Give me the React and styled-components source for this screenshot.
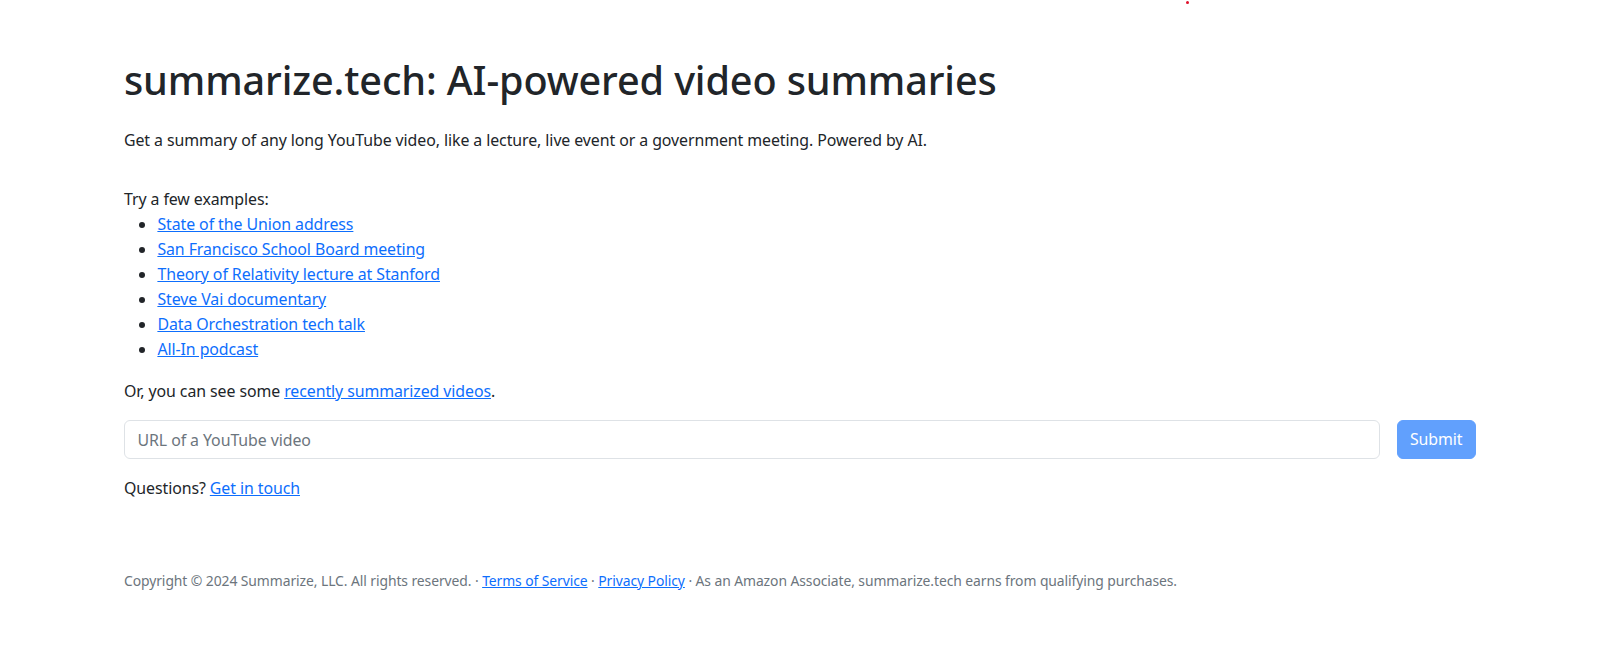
import React from 'react';
import styled, { createGlobalStyle } from 'styled-components';

const GlobalStyle = createGlobalStyle`
  * { box-sizing: border-box; }
  body {
    margin: 0;
    background: #fff;
    color: #212529;
    font-family: "Noto Sans", "Open Sans", sans-serif;
    font-size: 15.9px;
    line-height: 25px;
    letter-spacing: -0.005em;
  }
`;

const Page = styled.main`
  position: relative;
  width: 1352px;
  margin: 0 auto;
  padding-top: 55px;
`;

const Dot = styled.span`
  position: absolute;
  top: 1px;
  left: 1062px;
  width: 3px;
  height: 3px;
  border-radius: 50%;
  background: #e0102a;
`;

const Title = styled.h1`
  margin: 0 0 23px;
  font-size: 39.6px;
  line-height: 50px;
  font-weight: 500;
  letter-spacing: -0.003em;
`;

const Text = styled.p`
  margin: 0 0 ${(p) => p.$gap || 0}px;
`;

const Examples = styled.ul`
  margin: 0 0 17px;
  padding-left: 33.4px;
  li { line-height: 25px; }
`;

const Link = styled.a`
  color: #0d6efd;
  text-decoration: underline;
`;

const Form = styled.form`
  display: flex;
  gap: 16.7px;
  margin-bottom: 17px;
`;

const Input = styled.input`
  flex: 1;
  height: 39px;
  padding: 6px 12.5px;
  font: inherit;
  letter-spacing: inherit;
  color: #212529;
  border: 1px solid #dee2e6;
  border-radius: 6px;
  &::placeholder { color: #6c757d; }
`;

const Button = styled.button`
  width: 79.5px;
  height: 39px;
  font: inherit;
  letter-spacing: inherit;
  color: #fff;
  background: #0d6efd;
  border: 1px solid #0d6efd;
  border-radius: 6px;
  opacity: 0.65;
`;

const Footer = styled.footer`
  margin-top: 69px;
  font-size: 13.9px;
  line-height: 22px;
  color: #6c757d;
  a { color: #0d6efd; }
`;

const examples = [
  'State of the Union address',
  'San Francisco School Board meeting',
  'Theory of Relativity lecture at Stanford',
  'Steve Vai documentary',
  'Data Orchestration tech talk',
  'All-In podcast',
];

export default function App() {
  return (
    <>
      <GlobalStyle />
      <Page>
        <Dot />
        <Title>summarize.tech: AI-powered video summaries</Title>
        <Text $gap={34}>
          Get a summary of any long YouTube video, like a lecture, live event or a government meeting. Powered by AI.
        </Text>
        <Text>Try a few examples:</Text>
        <Examples>
          {examples.map((e) => (
            <li key={e}><Link href="#">{e}</Link></li>
          ))}
        </Examples>
        <Text $gap={16}>
          Or, you can see some <Link href="#">recently summarized videos</Link>.
        </Text>
        <Form onSubmit={(e) => e.preventDefault()}>
          <Input placeholder="URL of a YouTube video" />
          <Button type="submit" disabled>Submit</Button>
        </Form>
        <Text>
          Questions? <Link href="#">Get in touch</Link>
        </Text>
        <Footer>
          Copyright © 2024 Summarize, LLC. All rights reserved. · <Link href="#">Terms of Service</Link> · <Link href="#">Privacy Policy</Link> · As an Amazon Associate, summarize.tech earns from qualifying purchases.
        </Footer>
      </Page>
    </>
  );
}
